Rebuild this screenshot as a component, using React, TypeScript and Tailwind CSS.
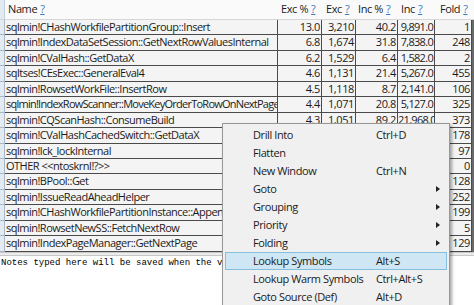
import React from "react"

type Row = { name: string; excPct: string; exc: string; incPct: string; inc: string; fold: string; tight?: boolean }

const rows: Row[] = [
  { name: "sqlmin!CHashWorkfilePartitionGroup::Insert", excPct: "13.0", exc: "3,210", incPct: "40.2", inc: "9,891.0", fold: "1" },
  { name: "sqlmin!IndexDataSetSession::GetNextRowValuesInternal", excPct: "6.8", exc: "1,674", incPct: "31.8", inc: "7,838.0", fold: "248" },
  { name: "sqlmin!CValHash::GetDataX", excPct: "6.2", exc: "1,529", incPct: "6.4", inc: "1,582.0", fold: "2" },
  { name: "sqltses!CEsExec::GeneralEval4", excPct: "4.6", exc: "1,131", incPct: "21.4", inc: "5,267.0", fold: "455" },
  { name: "sqlmin!RowsetWorkFile::InsertRow", excPct: "4.5", exc: "1,118", incPct: "8.7", inc: "2,141.0", fold: "106" },
  { name: "sqlmin!IndexRowScanner::MoveKeyOrderToRowOnNextPage", excPct: "4.4", exc: "1,071", incPct: "20.8", inc: "5,127.0", fold: "325", tight: true },
  { name: "sqlmin!CQScanHash::ConsumeBuild", excPct: "4.3", exc: "1,051", incPct: "89.2", inc: "21,968.0", fold: "373" },
  { name: "sqlmin!CValHashCachedSwitch::GetDataX", excPct: "3.9", exc: "960", incPct: "5.1", inc: "1,262.0", fold: "178" },
  { name: "sqlmin!lck_lockInternal", excPct: "3.1", exc: "772", incPct: "4.0", inc: "988.0", fold: "97" },
  { name: "OTHER <<ntoskrnl!?>>", excPct: "2.9", exc: "711", incPct: "2.9", inc: "711.0", fold: "0" },
  { name: "sqlmin!BPool::Get", excPct: "2.4", exc: "590", incPct: "3.3", inc: "815.0", fold: "128" },
  { name: "sqlmin!IssueReadAheadHelper", excPct: "2.1", exc: "517", incPct: "6.0", inc: "1,476.0", fold: "252" },
  { name: "sqlmin!CHashWorkfilePartitionInstance::AppendHashRow", excPct: "1.9", exc: "468", incPct: "4.2", inc: "1,034.0", fold: "199" },
  { name: "sqlmin!RowsetNewSS::FetchNextRow", excPct: "1.7", exc: "421", incPct: "2.2", inc: "541.0", fold: "5" },
  { name: "sqlmin!IndexPageManager::GetNextPage", excPct: "1.5", exc: "369", incPct: "2.0", inc: "492.0", fold: "129" },
]

function Help() {
  return <span className="ml-[3px] text-[#3a78c2] underline">?</span>
}

function Arrow() {
  return <span className="inline-block h-0 w-0 border-y-[3px] border-l-[4px] border-y-transparent border-l-[#222]" />
}

const menu: { label: string; key?: string; sub?: boolean; hot?: boolean }[] = [
  { label: "Drill Into", key: "Ctrl+D" },
  { label: "Flatten" },
  { label: "New Window", key: "Ctrl+N" },
  { label: "Goto", sub: true },
  { label: "Grouping", sub: true },
  { label: "Priority", sub: true },
  { label: "Folding", sub: true },
  { label: "Lookup Symbols", key: "Alt+S", hot: true },
  { label: "Lookup Warm Symbols", key: "Ctrl+Alt+S" },
  { label: "Goto Source (Def)", key: "Alt+D" },
]

export default function App() {
  return (
    <div className="relative h-[305px] w-[474px] overflow-hidden bg-white font-['Open_Sans',sans-serif] text-[11px] tracking-[-0.4px] text-[#1b1b1b]">
      {/* header */}
      <div className="flex h-[20px] items-center border-b border-[#d6d6d6] bg-[#fafafa]">
        <div className="h-full w-[5px] border-r border-[#c3cfdb] bg-[#e2eaf2]" />
        <div className="w-[273px] pl-[3px]">Name<Help /></div>
        <div className="w-[44px] pl-[3px]">Exc %<Help /></div>
        <div className="w-[34px] pl-[4px]">Exc<Help /></div>
        <div className="w-[42px] pl-[2px]">Inc %<Help /></div>
        <div className="w-[37px] pl-[3px]">Inc<Help /></div>
        <div className="w-[37px] pl-[5px]">Fold<Help /></div>
      </div>

      {/* rows */}
      <div className="flex flex-col">
        {rows.map((r) => (
          <div key={r.name} className="flex h-[15.45px] leading-[14px]">
            <div className="w-[5px] border-r border-b border-[#a9b8c8] bg-[#e2eaf2]" />
            <div
              className={
                r.tight
                  ? "w-[273px] overflow-hidden whitespace-nowrap border-r border-b border-[#4a4a4a] bg-[#f4f4f4] pl-[1px] tracking-[-0.75px]"
                  : "w-[273px] overflow-hidden whitespace-nowrap border-r border-b border-[#4a4a4a] bg-[#f4f4f4] pl-[1px] tracking-[-0.5px]"
              }
            >
              {r.name}
            </div>
            <div className="w-[44px] border-r border-b border-[#4a4a4a] bg-[#f4f4f4] pr-[1px] text-right">{r.excPct}</div>
            <div className="w-[34px] border-r border-b border-[#4a4a4a] bg-[#f4f4f4] pr-[1px] text-right">{r.exc}</div>
            <div className="w-[42px] border-r border-b border-[#4a4a4a] bg-[#f4f4f4] pr-[1px] text-right">{r.incPct}</div>
            <div className="w-[37px] overflow-hidden whitespace-nowrap border-r border-b border-[#4a4a4a] bg-[#f4f4f4] pr-[1px] text-right tracking-[-0.7px]">{r.inc}</div>
            <div className="w-[37px] border-r border-b border-[#4a4a4a] bg-[#f4f4f4] pr-[1px] text-right">{r.fold}</div>
            <div className="w-[2px] bg-[#6a6a6a]" />
          </div>
        ))}
      </div>

      {/* splitter */}
      <div className="h-[4px] border-y border-[#c8c8c8] bg-[#ececec]" />

      {/* notes */}
      <div className="whitespace-nowrap pl-[1px] pt-[1px] font-['Liberation_Mono',monospace] text-[9px] leading-[12px] tracking-normal text-black">
        Notes typed here will be saved when the view is closed.
      </div>

      {/* context menu */}
      <div className="absolute left-[222px] top-[123px] h-[200px] w-[228px] border border-[#979797] bg-[#f0f0f0] p-[2px] shadow-[2px_2px_3px_rgba(0,0,0,0.35)]">
        {menu.map((m) => (
          <div
            key={m.label}
            className={
              m.hot
                ? "flex h-[18px] items-center border border-[#86bede] bg-[#cfe6f4] text-[#1b1b1b]"
                : "flex h-[18px] items-center border border-transparent text-[#1b1b1b]"
            }
          >
            <span className="w-[150px] pl-[27px]">{m.label}</span>
            <span className="w-[60px]">{m.key}</span>
            <span className="flex w-[8px] items-center">{m.sub ? <Arrow /> : null}</span>
          </div>
        ))}
      </div>
    </div>
  )
}
